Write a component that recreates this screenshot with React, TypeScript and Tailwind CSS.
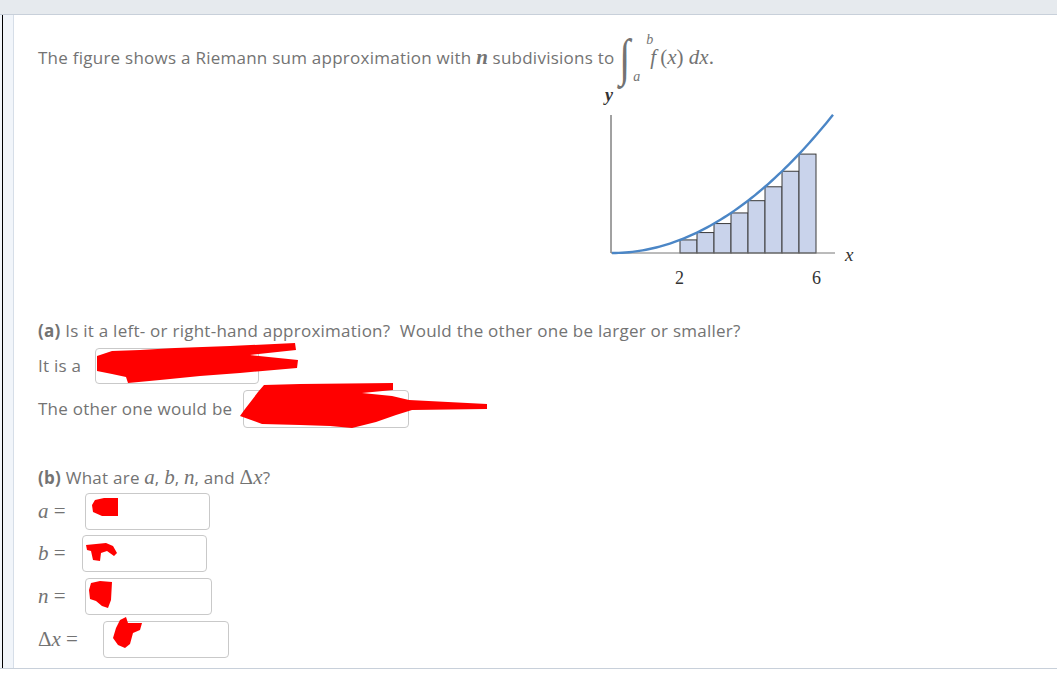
const sans = { fontFamily: '"Open Sans", "Noto Sans", sans-serif', letterSpacing: "0.25px" };
const serif = '"Liberation Serif", "DejaVu Serif", serif';

function M({ children }: { children: React.ReactNode }) {
  return (
    <span className="italic" style={{ fontFamily: serif, fontSize: "21px", letterSpacing: 0 }}>
      {children}
    </span>
  );
}

function Box({ w, h }: { w: number; h: number }) {
  return <div className="rounded-[4px] border border-[#c9c9c9] bg-white" style={{ width: w, height: h }} />;
}

function Figure() {
  const rects = [];
  for (let i = 0; i < 8; i++) {
    const u = 2 + i * 0.5;
    const h = 3.27 * u * u;
    rects.push(
      <rect key={i} x={13 + 34 * u} y={168 - h} width={17} height={h} fill="#c9d3eb" stroke="#3a3a3a" strokeWidth={1} />
    );
  }
  const pts = [];
  for (let u = 0; u <= 6.5; u += 0.1) pts.push(`${13 + 34 * u},${168 - 3.27 * u * u}`);
  return (
    <svg width={270} height={205} className="block" style={{ fontFamily: serif }}>
      <line x1={12} y1={30} x2={12} y2={168} stroke="#444" strokeWidth={1} />
      {rects}
      <line x1={12} y1={168} x2={236} y2={168} stroke="#777" strokeWidth={1} />
      <polyline points={pts.join(" ")} fill="none" stroke="#4b86c6" strokeWidth={2.4} />
      <text x={6} y={16} fontSize={18} fontStyle="italic" fontWeight="bold" fill="#333">y</text>
      <text x={246} y={176} fontSize={19} fontStyle="italic" fill="#333">x</text>
      <text x={76} y={199} fontSize={18} fill="#333">2</text>
      <text x={213} y={199} fontSize={18} fill="#333">6</text>
    </svg>
  );
}

function Scribbles() {
  return (
    <svg className="pointer-events-none absolute left-0 top-0" width={1057} height={683}>
      <g fill="#ff0000">
        <polygon points="97,356 112,351 140,350 175,348 230,346 295,343 296,350 250,355 298,360 297,368 240,373 200,376 160,380 128,383 126,377 112,374 97,371" />
        <polygon points="264,385 300,384 393,383 393,390 362,393 392,396 409,400 487,404 487,409 412,410 396,415 376,422 352,428 330,426 300,425 262,424 240,416 245,409 252,400 258,392" />
        <polygon points="95,500 104,498 118,498 118,516 102,516 93,512 92,505" />
        <polygon points="86,545 96,544 106,543 113,546 117,553 114,556 107,551 101,553 100,561 93,560 91,551 87,550" />
        <polygon points="91,583 100,581 112,582 111,600 108,608 102,606 96,601 90,599 89,590" />
        <polygon points="120,620 126,617 128,623 142,623 140,630 133,633 130,644 125,648 118,645 113,638 116,628" />
      </g>
    </svg>
  );
}

function Lbl({ w, children }: { w: number; children: React.ReactNode }) {
  return (
    <span className="shrink-0" style={{ width: w, fontFamily: serif, fontSize: "21px", letterSpacing: 0 }}>
      {children}
    </span>
  );
}

export default function App() {
  return (
    <div className="relative h-[683px] w-[1057px] overflow-hidden bg-white text-[17px] text-[#737373]" style={sans}>
      <div className="h-[15px] border-b border-[#c8d0da] bg-[#e6eaee]" />
      <div className="flex h-[654px] border-b border-[#c8d0da]">
        <div className="flex w-[14px] border-r border-[#d6dee8] bg-[#f1f5fa]">
          <div className="ml-[2px] w-px bg-black" />
        </div>
        <div className="flex-1 pl-[24px]">
          <div className="mt-[18px] flex h-[50px] items-center whitespace-nowrap">
            <span>The figure shows a Riemann sum approximation with&nbsp;</span>
            <span className="font-bold">
              <M>n</M>
            </span>
            <span>&nbsp;subdivisions to&nbsp;</span>
            <span className="relative inline-flex items-center" style={{ fontFamily: serif, letterSpacing: 0 }}>
              <span className="inline-block text-[40px] italic leading-none" style={{ transform: "scaleY(1.3)" }}>∫</span>
              <span className="absolute left-[27px] top-[-9px] text-[14px] italic">b</span>
              <span className="absolute left-[14px] top-[28px] text-[14px] italic">a</span>
              <span className="ml-[20px]">
                <M>f</M>
                <span className="text-[21px]">&thinsp;(</span>
                <M>x</M>
                <span className="text-[21px]">)&nbsp;</span>
                <M>dx</M>
                <span className="text-[21px]">.</span>
              </span>
            </span>
          </div>
          <div className="ml-[561px] mt-[2px]">
            <Figure />
          </div>
          <div className="mt-[29px] h-[24px] whitespace-nowrap leading-[24px]">
            <span className="font-bold">(a)</span> Is it a left- or right-hand approximation?&nbsp; Would the other one be larger or smaller?
          </div>
          <div className="mt-[5px] flex items-center">
            <span className="w-[57px] shrink-0">It is a</span>
            <Box w={164} h={36} />
          </div>
          <div className="mt-[6px] flex items-center">
            <span className="w-[205px] shrink-0">The other one would be</span>
            <Box w={166} h={38} />
          </div>
          <div className="mt-[37px] h-[24px] whitespace-nowrap leading-[24px]">
            <span className="font-bold">(b)</span> What are <M>a</M>, <M>b</M>, <M>n</M>, and{" "}
            <span style={{ fontFamily: serif, fontSize: "21px" }}>Δ</span>
            <M>x</M>?
          </div>
          <div className="mt-[4px] flex items-center">
            <Lbl w={47}><i>a</i> =</Lbl>
            <Box w={125} h={37} />
          </div>
          <div className="mt-[5px] flex items-center">
            <Lbl w={44}><i>b</i> =</Lbl>
            <Box w={125} h={37} />
          </div>
          <div className="mt-[6px] flex items-center">
            <Lbl w={47}><i>n</i> =</Lbl>
            <Box w={127} h={37} />
          </div>
          <div className="mt-[6px] flex items-center">
            <Lbl w={65}>Δ<i>x</i> =</Lbl>
            <Box w={126} h={37} />
          </div>
        </div>
      </div>
      <Scribbles />
    </div>
  );
}
